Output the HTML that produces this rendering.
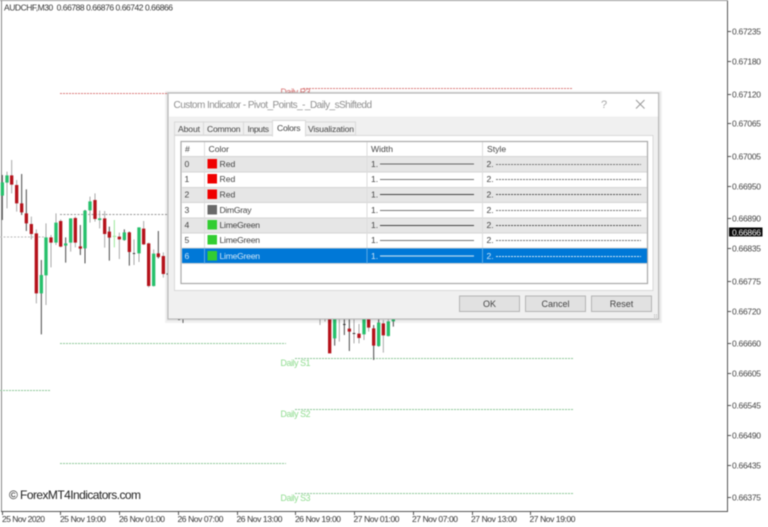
<!DOCTYPE html>
<html><head><meta charset="utf-8"><title>Custom Indicator</title>
<style>
html,body{margin:0;padding:0;background:#fff;width:768px;height:527px;overflow:hidden}
svg{display:block;filter:blur(.45px)}
text{font-family:"Liberation Sans",sans-serif;white-space:pre}
.p text{font-size:8.5px;fill:#444}
.t text{font-size:8.5px;fill:#333}
.d text{font-size:8.6px;fill:#444}
.w text{font-size:8.6px;fill:#cfe6f8}
</style></head><body>
<svg width="768" height="527" viewBox="0 0 768 527" xmlns="http://www.w3.org/2000/svg">
<rect width="768" height="527" fill="#fff"/>
<!-- frame -->
<path d="M0 .5H728" stroke="#999" fill="none"/>
<path d="M1.5 0V511" stroke="#888" stroke-width="1" fill="none"/>
<path d="M727.5 1V511.5H1" stroke="#555" fill="none"/>
<text x="4" y="10.5" font-size="8.5" fill="#333" textLength="169">AUDCHF,M30  0.66788 0.66876 0.66742 0.66866</text>

<!-- level lines -->
<g fill="none" stroke-width="1">
<path d="M60 93.5H170M303 88.5H573" stroke="#d97c7c" stroke-dasharray="2 1"/>
<path d="M60 214.5H170" stroke="#999" stroke-dasharray="2 1.5"/>
<path d="M0 237H46" stroke="#bbb" stroke-dasharray="2 1.5"/>
<path d="M60 343.5H286M295 358.5H573M295 409.5H573M60 463.5H286M295 493.5H573M0 390.5H50" stroke="#8fc79a" stroke-dasharray="2 1"/>
</g>
<g font-size="8.8" fill="#8fdc8f">
<text x="280.5" y="366" textLength="30">Daily S1</text>
<text x="280.5" y="417" textLength="30">Daily S2</text>
<text x="280.5" y="501" textLength="30">Daily S3</text>
</g>
<text x="280.5" y="95" font-size="8.8" fill="#d87070" textLength="30">Daily R3</text>

<!-- candles left -->
<g transform="translate(0,150) scale(.33333)" fill="none">
<path stroke="#4a4a4a" stroke-width="3" d="M7 75V210M65 72V195M79 118V243M124 330V553M197 262V338M241 225V315M255 180V340M328 230V332M373 238V272M388 245V347M475 243V325"/>
<path stroke="#a8a8a8" stroke-width="3" d="M21 65V175M35 30V130M50 90V185M94 200V268M109 238V460M138 220V465M153 255V352M168 190V285M182 208V292M212 205V305M226 200V292M270 140V218M285 130V215M299 182V235M314 183V293M358 248V327M402 268V345M417 232V336M431 213V285M446 278V412M461 298V410M490 307V383"/>
<path stroke="#9be89b" stroke-width="3" d="M343 210V292M338 259H349"/>
<path stroke="#b5121b" stroke-width="10" d="M35 76V104M50 105V160M65 160V187M79 190V220M94 222V252M109 250V430M153 262V278M182 213V290M226 204V278M241 289V296M285 150V207M314 205V252M328 245V263M358 260V268M388 247V306M431 236V283M446 280V408M475 310V321M490 318V372"/>
<path stroke="#27c06c" stroke-width="10" d="M7 97V137M21 76V98M124 375V430M138 262V376M168 218V278M197 280V287M212 205V278M255 182V295M270 154V181M299 205V210M373 247V270M417 232V310M461 311V408"/>
<path stroke="#333" stroke-width="7" d="M402 309V312"/>
<path stroke="#333" stroke-width="4" d="M502 370V374"/>
</g>
<!-- candles bottom -->
<g transform="translate(270,310) scale(.33333)" fill="none">
<path stroke="#4a4a4a" stroke-width="3" d="M194 27V107M223 27V75M238 27V123M311 45V150M326 27V110M370 27V50"/>
<path stroke="#a8a8a8" stroke-width="3" d="M150 27V45M165 27V35M208 27V95M252 27V100M267 42V100M282 27V90M296 27V65M340 30V128M355 27V80"/>
<path stroke="#b5121b" stroke-width="10" d="M179 27V130M238 56V65M267 71V84M296 27V53M311 55V107M340 40V76"/>
<path stroke="#27c06c" stroke-width="10" d="M194 27V85M282 27V73M326 38V108M355 34V78M370 27V34"/>
<path stroke="#333" stroke-width="8" d="M223 42V45M252 69V72"/>
</g>
<path d="M183 318V323" stroke="#666"/><rect x="178" y="318" width="2" height="2" fill="#333"/>
<path d="M320 318V323" stroke="#aaa"/>

<!-- price axis -->
<path stroke="#555" fill="none" d="M728 31.5h3M728 61.5h3M728 94.5h3M728 123.5h3M728 156.5h3M728 186.5h3M728 218.5h3M728 248.5h3M728 281.5h3M728 311.5h3M728 343.5h3M728 373.5h3M728 405.5h3M728 435.5h3M728 465.5h3M728 497.5h3"/>
<g class="p">
<text x="732" y="34.5" textLength="29">0.67235</text>
<text x="732" y="64.5" textLength="29">0.67180</text>
<text x="732" y="97.5" textLength="29">0.67120</text>
<text x="732" y="126.5" textLength="29">0.67065</text>
<text x="732" y="159.5" textLength="29">0.67005</text>
<text x="732" y="189.5" textLength="29">0.66950</text>
<text x="732" y="221.5" textLength="29">0.66890</text>
<text x="732" y="251.5" textLength="29">0.66835</text>
<text x="732" y="284.5" textLength="29">0.66775</text>
<text x="732" y="314.5" textLength="29">0.66720</text>
<text x="732" y="346.5" textLength="29">0.66660</text>
<text x="732" y="376.5" textLength="29">0.66605</text>
<text x="732" y="408.5" textLength="29">0.66545</text>
<text x="732" y="438.5" textLength="29">0.66490</text>
<text x="732" y="468.5" textLength="29">0.66435</text>
<text x="732" y="500.5" textLength="29">0.66375</text>
</g>
<rect x="729" y="227.5" width="33.5" height="9" fill="#0a0a0a"/>
<text x="732" y="235.3" font-size="8.5" fill="#eee" textLength="29">0.66866</text>

<!-- time axis -->
<path stroke="#555" fill="none" d="M2.5 512v3M60.5 512v3M119.5 512v3M178.5 512v3M237.5 512v3M295.5 512v3M354.5 512v3M413.5 512v3M472.5 512v3M530.5 512v3"/>
<g class="t">
<text x="2" y="522" textLength="43">25 Nov 2020</text>
<text x="60" y="522" textLength="46">25 Nov 19:00</text>
<text x="119" y="522" textLength="46">26 Nov 01:00</text>
<text x="177.5" y="522" textLength="46">26 Nov 07:00</text>
<text x="236.5" y="522" textLength="46">26 Nov 13:00</text>
<text x="295" y="522" textLength="46">26 Nov 19:00</text>
<text x="353.5" y="522" textLength="46">27 Nov 01:00</text>
<text x="412" y="522" textLength="46">27 Nov 07:00</text>
<text x="471" y="522" textLength="46">27 Nov 13:00</text>
<text x="529.5" y="522" textLength="46">27 Nov 19:00</text>
</g>
<text x="9" y="499" font-size="12" fill="#222" textLength="132">© ForexMT4Indicators.com</text>

<!-- dialog -->
<rect x="165" y="91" width="497" height="232" fill="#000" opacity=".05"/>
<rect x="166.5" y="92" width="494" height="229" fill="#000" opacity=".06"/>
<rect x="168" y="93" width="490.500" height="226" fill="#f0f0f0" stroke="#b4b4b4"/>
<rect x="169" y="94" width="489" height="22.500" fill="#fff"/>
<text x="173.500" y="108" font-size="10" fill="#8f8f8f" textLength="198.500">Custom Indicator - Pivot_Points_-_Daily_sShiftedd</text>
<text x="601" y="108" font-size="11" fill="#a8a8a8">?</text>
<path d="M636 100L644.500 108.500M644.500 100L636 108.500" stroke="#9a9a9a" fill="none"/>

<!-- tabs -->
<rect x="174.500" y="122" width="181" height="13" fill="#f0f0f0" stroke="#d9d9d9"/>
<path d="M203.500 122V135M243.500 122V135M272.500 122V135" stroke="#d9d9d9" fill="none"/>
<rect x="174.500" y="135.500" width="478.500" height="155" fill="#fff" stroke="#d9d9d9"/>
<rect x="272.500" y="120.500" width="33" height="15.500" fill="#fff" stroke="#d9d9d9"/>
<path d="M273 136H305" stroke="#fff" stroke-width="1.500"/>
<g class="d">
<text x="178" y="132" textLength="22">About</text>
<text x="207" y="132" textLength="33.500">Common</text>
<text x="247.500" y="132" textLength="21.500">Inputs</text>
<text x="277" y="131" textLength="23.500">Colors</text>
<text x="308" y="132" textLength="46">Visualization</text>
</g>

<!-- table -->
<rect x="181" y="141.500" width="466.500" height="142" fill="#fff" stroke="#a9a9a9" stroke-width="1.200"/>
<rect x="182" y="157" width="465" height="15" fill="#e6e6e6"/>
<rect x="182" y="187.500" width="465" height="15" fill="#e6e6e6"/>
<rect x="182" y="218" width="465" height="15" fill="#e6e6e6"/>
<rect x="182" y="248" width="465" height="15.500" fill="#0078d7"/>
<path d="M182 156.500H647M182 172H647M182 187.500H647M182 202.500H647M182 218H647M182 233H647M182 248H647M182 263.500H647" stroke="#d4d4d4" fill="none"/>
<path d="M204.500 142V248M367 142V248M482.500 142V248" stroke="#dcdcdc" fill="none"/>
<path d="M204.500 248V263.500M367 248V263.500M482.500 248V263.500" stroke="#5aa9e4" fill="none"/>
<g class="d">
<text x="185" y="152">#</text><text x="208.500" y="152">Color</text><text x="371" y="152">Width</text><text x="487" y="152">Style</text>
<text x="184.500" y="167">0</text><text x="219.500" y="167">Red</text><text x="371" y="167">1.</text><text x="486.500" y="167">2.</text>
<text x="184.500" y="182">1</text><text x="219.500" y="182">Red</text><text x="371" y="182">1.</text><text x="486.500" y="182">2.</text>
<text x="184.500" y="197.500">2</text><text x="219.500" y="197.500">Red</text><text x="371" y="197.500">1.</text><text x="486.500" y="197.500">2.</text>
<text x="184.500" y="213">3</text><text x="219.500" y="213" textLength="32">DimGray</text><text x="371" y="213">1.</text><text x="486.500" y="213">2.</text>
<text x="184.500" y="228">4</text><text x="219.500" y="228" textLength="40.500">LimeGreen</text><text x="371" y="228">1.</text><text x="486.500" y="228">2.</text>
<text x="184.500" y="243">5</text><text x="219.500" y="243" textLength="40.500">LimeGreen</text><text x="371" y="243">1.</text><text x="486.500" y="243">2.</text>
</g>
<g class="w">
<text x="184.500" y="259">6</text><text x="219.500" y="259" textLength="40.500">LimeGreen</text><text x="371" y="259">1.</text><text x="486.500" y="259">2.</text>
</g>
<rect x="207.500" y="159" width="9.500" height="9.500" fill="#f00000"/>
<rect x="207.500" y="174" width="9.500" height="9.500" fill="#f00000"/>
<rect x="207.500" y="189.500" width="9.500" height="9.500" fill="#f00000"/>
<rect x="207.500" y="205" width="9.500" height="9.500" fill="#696969"/>
<rect x="207.500" y="220" width="9.500" height="9.500" fill="#32cd32"/>
<rect x="207.500" y="235" width="9.500" height="9.500" fill="#32cd32"/>
<rect x="207.500" y="251" width="9.500" height="9.500" fill="#32cd32"/>
<g fill="none">
<path d="M380 164H474" stroke="#666" stroke-width="1"/>
<path d="M380 179.500H474M380 210.500H474M380 240.500H474" stroke="#777" stroke-width="1"/>
<path d="M380 194.500H474M380 225.500H474" stroke="#444" stroke-width="1"/>
<path d="M380 256H474" stroke="#b5d7f0" stroke-width="1.200"/>
<path d="M496 164.500H641M496 179.500H641M496 210.500H641M496 240.500H641" stroke="#777" stroke-dasharray="2 1"/>
<path d="M496 194.500H641M496 225.500H641" stroke="#555" stroke-dasharray="2 1"/>
<path d="M496 256.500H641" stroke="#d5e9f8" stroke-dasharray="2 1"/>
</g>

<!-- buttons -->
<rect x="459.500" y="296" width="60" height="15.500" fill="#e1e1e1" stroke="#b4b4b4"/>
<rect x="525.500" y="296" width="60" height="15.500" fill="#e1e1e1" stroke="#b4b4b4"/>
<rect x="591.500" y="296" width="60" height="15.500" fill="#e1e1e1" stroke="#b4b4b4"/>
<g font-size="9" fill="#444" text-anchor="middle">
<text x="489.500" y="307">OK</text><text x="555.500" y="307">Cancel</text><text x="621.500" y="307">Reset</text>
</g>
<path d="M654 315h1M656 315h1M654 317h1M656 317h1" stroke="#b0b0b0" fill="none"/>
</svg>
</body></html>
